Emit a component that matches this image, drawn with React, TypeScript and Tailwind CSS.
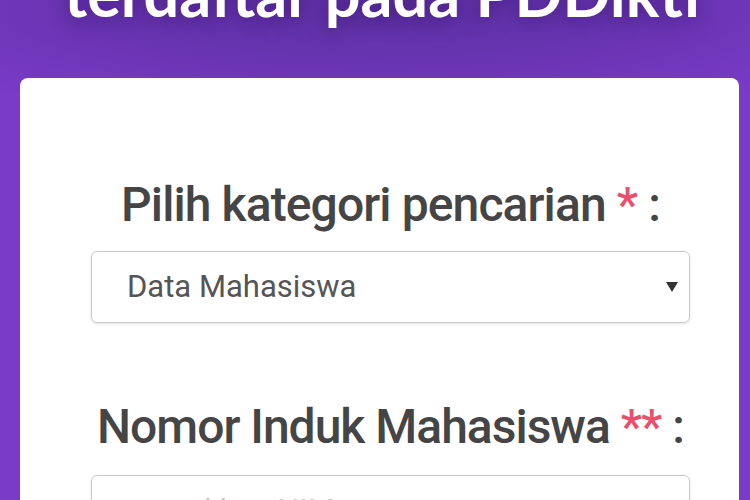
export default function App() {
  return (
    <div className="h-[500px] w-[750px] overflow-hidden bg-[#7a3bc8] bg-[radial-gradient(ellipse_75%_110px_at_50%_10px,#5e31a4_0%,#6a35b4_55%,#7a3bc8_100%)]">
      <div className="flex h-[78px] justify-center">
        <h1 className="ml-[14px] mt-[-39px] h-fit whitespace-nowrap text-[63px] font-bold leading-none text-white [font-family:Lato,'Open_Sans',sans-serif] [text-shadow:0_4px_18px_rgba(45,15,95,0.55)]">
          terdaftar pada PDDikti
        </h1>
      </div>
      <div className="ml-[20px] mr-[11px] h-[430px] rounded-t-[8px] bg-white pl-[71px] pr-[49px] pt-[99px] [font-family:Roboto,'Liberation_Sans',sans-serif]">
        <div className="whitespace-nowrap text-center text-[48px] font-medium leading-[56px] tracking-[-0.9px] text-[#454545]">
          Pilih kategori pencarian <span className="text-[#e9506c]">*</span> :
        </div>
        <div className="mt-[18px] flex h-[72px] items-center justify-between rounded-[6px] border-[1.5px] border-[#cacaca] pl-[35px] pr-[11px] shadow-[0_1px_3px_rgba(0,0,0,0.12)]">
          <span className="text-[31px] text-[#555555]">Data Mahasiswa</span>
          <svg width="12" height="10" viewBox="0 0 12 10">
            <path d="M0 0 H12 L6 10 Z" fill="#333333" />
          </svg>
        </div>
        <div className="mt-[76px] whitespace-nowrap text-center text-[48px] font-medium leading-[56px] tracking-[-1px] text-[#454545]">
          Nomor Induk Mahasiswa <span className="text-[#e9506c]">**</span> :
        </div>
        <div className="mt-[20px] flex h-[72px] items-center rounded-[6px] border-[1.5px] border-[#cacaca] pl-[35px] pr-[12px] shadow-[0_1px_3px_rgba(0,0,0,0.12)]">
          <span className="text-[31px] text-[#c8c8c8]">masukkan NIM</span>
        </div>
      </div>
    </div>
  );
}
